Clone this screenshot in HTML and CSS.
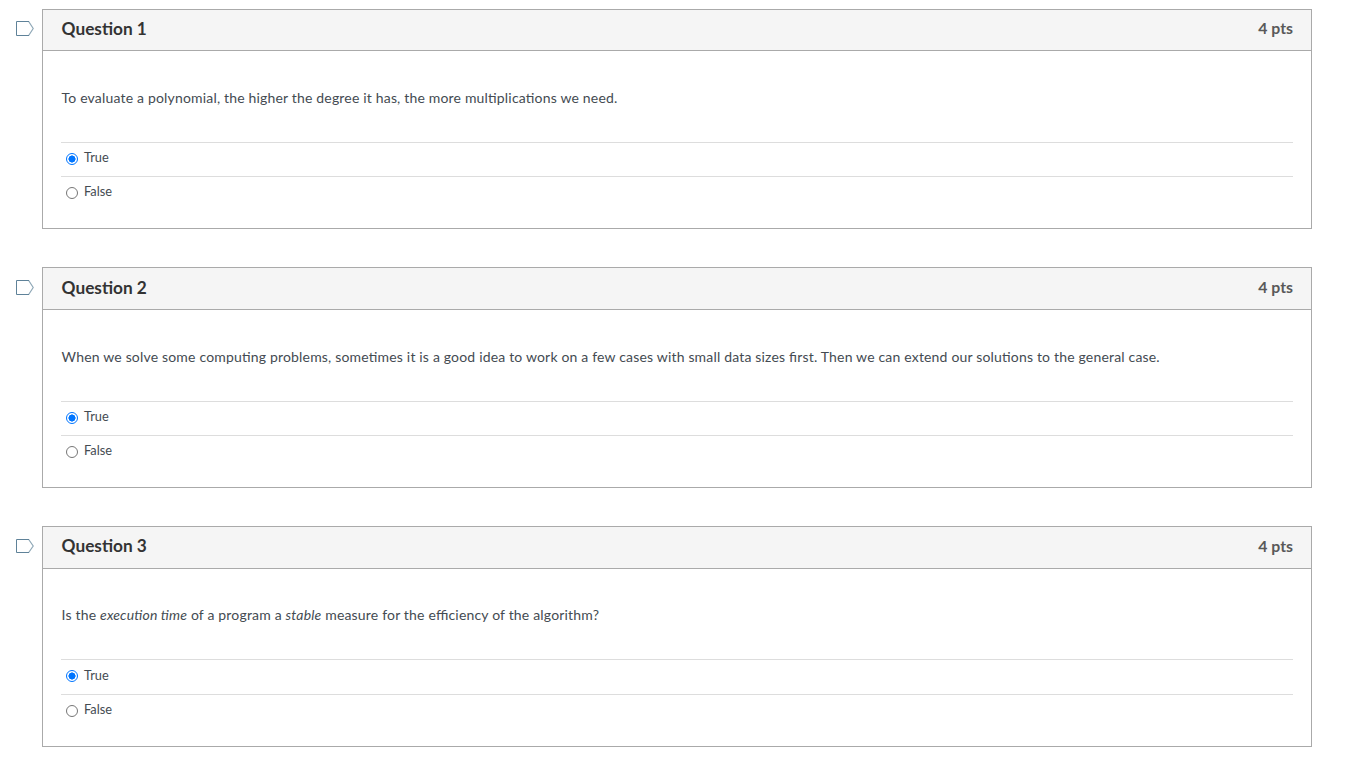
FILE: index.html
```html
<!DOCTYPE html>
<html lang="en">
<head>
<meta charset="utf-8">
<title>Quiz</title>
<link rel="stylesheet" href="styles.css">
</head>
<body>
<main class="quiz">
  <section class="row first">
    <svg class="flag" width="18" height="15" viewBox="0 0 18 15"><path class="edge" d="M12.7.5 17.2 7.5 12.7 14.5"/><path d="M13 .5H.5V14.5H13"/></svg>
    <article class="question">
      <header class="header"><h2 class="name">Question 1</h2><span class="points">4 pts</span></header>
      <div class="body">
        <p class="text">To evaluate a polynomial, the higher the degree it has, the more multiplications we need.</p>
        <label class="answer"><span class="radio checked"></span>True</label>
        <label class="answer"><span class="radio"></span>False</label>
      </div>
    </article>
  </section>
  <section class="row second">
    <svg class="flag" width="18" height="15" viewBox="0 0 18 15"><path class="edge" d="M12.7.5 17.2 7.5 12.7 14.5"/><path d="M13 .5H.5V14.5H13"/></svg>
    <article class="question">
      <header class="header"><h2 class="name">Question 2</h2><span class="points">4 pts</span></header>
      <div class="body">
        <p class="text">When we solve some computing problems, sometimes it is a good idea to work on a few cases with small data sizes first. Then we can extend our solutions to the general case.</p>
        <label class="answer"><span class="radio checked"></span>True</label>
        <label class="answer"><span class="radio"></span>False</label>
      </div>
    </article>
  </section>
  <section class="row third">
    <svg class="flag" width="18" height="14" viewBox="0 0 18 14"><path class="edge" d="M12.7.5 17.2 7 12.7 13.5"/><path d="M13 .5H.5V13.5H13"/></svg>
    <article class="question">
      <header class="header"><h2 class="name">Question 3</h2><span class="points">4 pts</span></header>
      <div class="body">
        <p class="text">Is the <em>execution time</em> of a program a <em>stable</em> measure for the efficiency of the algorithm?</p>
        <label class="answer"><span class="radio checked"></span>True</label>
        <label class="answer"><span class="radio"></span>False</label>
      </div>
    </article>
  </section>
</main>
</body>
</html>
```
FILE: styles.css
```css
* { box-sizing: border-box; }
body { margin: 0; background: #fff; color: #444b52; font-family: Lato, sans-serif; }
.quiz { padding: 9px 36px 0 16px; display: flex; flex-direction: column; gap: 38px; }
.row { display: flex; align-items: flex-start; gap: 8px; }
.flag { flex: none; margin-top: 12px; fill: none; stroke: #5f8299; stroke-width: 1; }
.edge { stroke: #8fa8b7; stroke-width: 1.2; }
.second .flag, .third .flag { margin-top: 13px; }
.question { flex: 1; border: 1px solid #aaa; height: 221px; }
.first .question { height: 220px; }
.header { height: 42px; padding: 8px 18px 0; display: flex; justify-content: space-between; align-items: flex-start; background: #f5f5f5; border-bottom: 1px solid #aaa; }
.first .header { height: 41px; padding-top: 7px; }
.third .header { padding-top: 7px; }
.name { margin: 0; padding-left: .6px; font-size: 17.25px; line-height: 24px; font-weight: 700; color: #333; }
.points { margin-top: -1px; font-size: 15.8px; line-height: 24px; font-weight: 700; color: #595959; }
.third .points { margin-top: 0; }
.body { padding: 34px 18px 0; }
.third .body { padding-top: 33px; }
.text { margin: 0 0 32px; padding-left: .6px; font-size: 14px; letter-spacing: .178px; font-feature-settings: "liga" 1; line-height: 25px; white-space: nowrap; }
.answer { height: 34px; padding: 4px 0 0 5px; display: flex; align-items: flex-start; gap: 6px; border-top: 1px solid #ddd; font-size: 12.8px; line-height: 20px; }
.third .answer { height: 35px; padding-top: 5px; }
.third .answer:last-child { padding-top: 4px; }
.radio { width: 12px; height: 12px; border: 1px solid #767676; border-radius: 50%; margin-top: 6px; }
.third .checked { margin-top: 5px; }
.checked { border-color: #0075ff; background: radial-gradient(circle, #0075ff 3.3px, #fff 3.8px); }
```
